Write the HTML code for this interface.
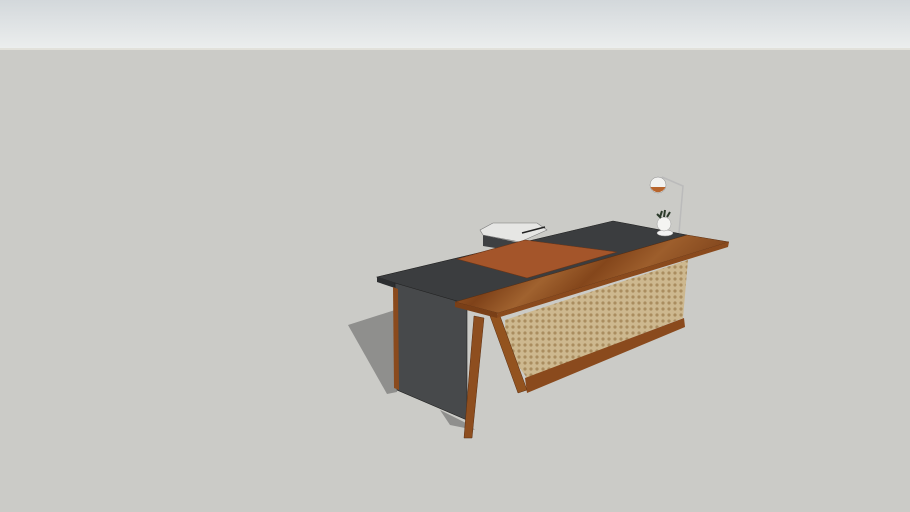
<!DOCTYPE html>
<html><head><meta charset="utf-8"><style>
html,body{margin:0;padding:0;width:910px;height:512px;overflow:hidden;background:#cbcbc7}
</style></head><body>
<svg width="910" height="512" viewBox="0 0 910 512" xmlns="http://www.w3.org/2000/svg">
<defs>
<linearGradient id="sky" x1="0" y1="0" x2="0" y2="1"><stop offset="0" stop-color="#d3d8db"/><stop offset="1" stop-color="#eceeee"/></linearGradient>
<linearGradient id="wood" x1="0" y1="0" x2="1" y2="0.3">
<stop offset="0" stop-color="#7a3f17"/><stop offset="0.15" stop-color="#9a5a2a"/><stop offset="0.3" stop-color="#7f4219"/><stop offset="0.45" stop-color="#a0622f"/><stop offset="0.6" stop-color="#84461b"/><stop offset="0.75" stop-color="#9d5e2c"/><stop offset="1" stop-color="#7c411a"/></linearGradient>
<pattern id="mesh" width="6" height="6" patternUnits="userSpaceOnUse"><rect width="6" height="6" fill="#cdb78c"/><circle cx="3" cy="3" r="1.6" fill="#a88a5a"/></pattern>
</defs>
<rect width="910" height="49" fill="url(#sky)"/>
<rect y="48" width="910" height="2" fill="#e2e1db"/>
<!-- shadow -->
<polygon points="348,325 395,310 397,392 387,394" fill="#8f8f8d"/>
<polygon points="440,410 470,425 475,430 450,425" fill="#8f8f8d"/>
<!-- printer -->
<polygon points="483,235 520,243 520,252 483,246" fill="#3e4042"/>
<polygon points="480,230 493,223 537,223 547,230 520,242 483,235" fill="#e6e6e4" stroke="#777" stroke-width="0.6"/>
<line x1="522" y1="233" x2="545" y2="227" stroke="#222" stroke-width="1.5"/>
<!-- black top back region -->
<polygon points="377,277 613,221 687,235 455,303" fill="#3b3d3f" stroke="#222" stroke-width="0.6"/>
<polygon points="377,277 455,303 455,308 377,282" fill="#2c2e30"/>
<!-- pedestal -->
<polygon points="395,283 467,304 467,420 397,390" fill="#47494b" stroke="#222" stroke-width="0.6"/>
<polygon points="393,287 398,289 399,390 394,388" fill="#8a4a1d"/>
<!-- leather -->
<polygon points="457,259 525,240 617,252 527,278" fill="#a4552a" stroke="#6b3517" stroke-width="0.6"/>
<!-- mesh -->
<polygon points="505,320 688,260 683,318 527,378 505,347" fill="url(#mesh)" opacity="0.95"/>
<polygon points="525,378 684,318 685,327 527,393" fill="#8a4a1d"/>
<!-- legs -->
<polygon points="474,316 484,318 472,438 464,438" fill="#8e4e1f" stroke="#5a2d10" stroke-width="0.5"/>
<polygon points="490,316 500,316 527,390 518,393" fill="#93531f" stroke="#5a2d10" stroke-width="0.5"/>
<!-- wood top -->
<polygon points="455,302 687,235 729,242 498,313" fill="url(#wood)" stroke="#5a2d10" stroke-width="0.5"/>
<polygon points="455,302 498,313 497,318 455,307" fill="#7a3f17"/>
<polygon points="498,313 729,242 728,247 497,318" fill="#8a4a1d"/>
<!-- plant -->
<ellipse cx="665" cy="233" rx="8" ry="3" fill="#f2f2f2" stroke="#999" stroke-width="0.5"/>
<circle cx="664" cy="224" r="7" fill="#f4f4f2" stroke="#999" stroke-width="0.5"/>
<path d="M660 217 L662 211 M664 217 L665 210 M667 217 L670 212 M661 218 L657 214" stroke="#2b3a2a" stroke-width="2"/>
<!-- lamp -->
<polyline points="662,177 683,186 679,233" fill="none" stroke="#bbb" stroke-width="1.5"/>
<circle cx="658" cy="185" r="8" fill="#f2f2f0" stroke="#888" stroke-width="0.5"/>
<path d="M650.5 187 A8 8 0 0 0 665.5 187 Z" fill="#b7652d"/>
</svg>
</body></html>
